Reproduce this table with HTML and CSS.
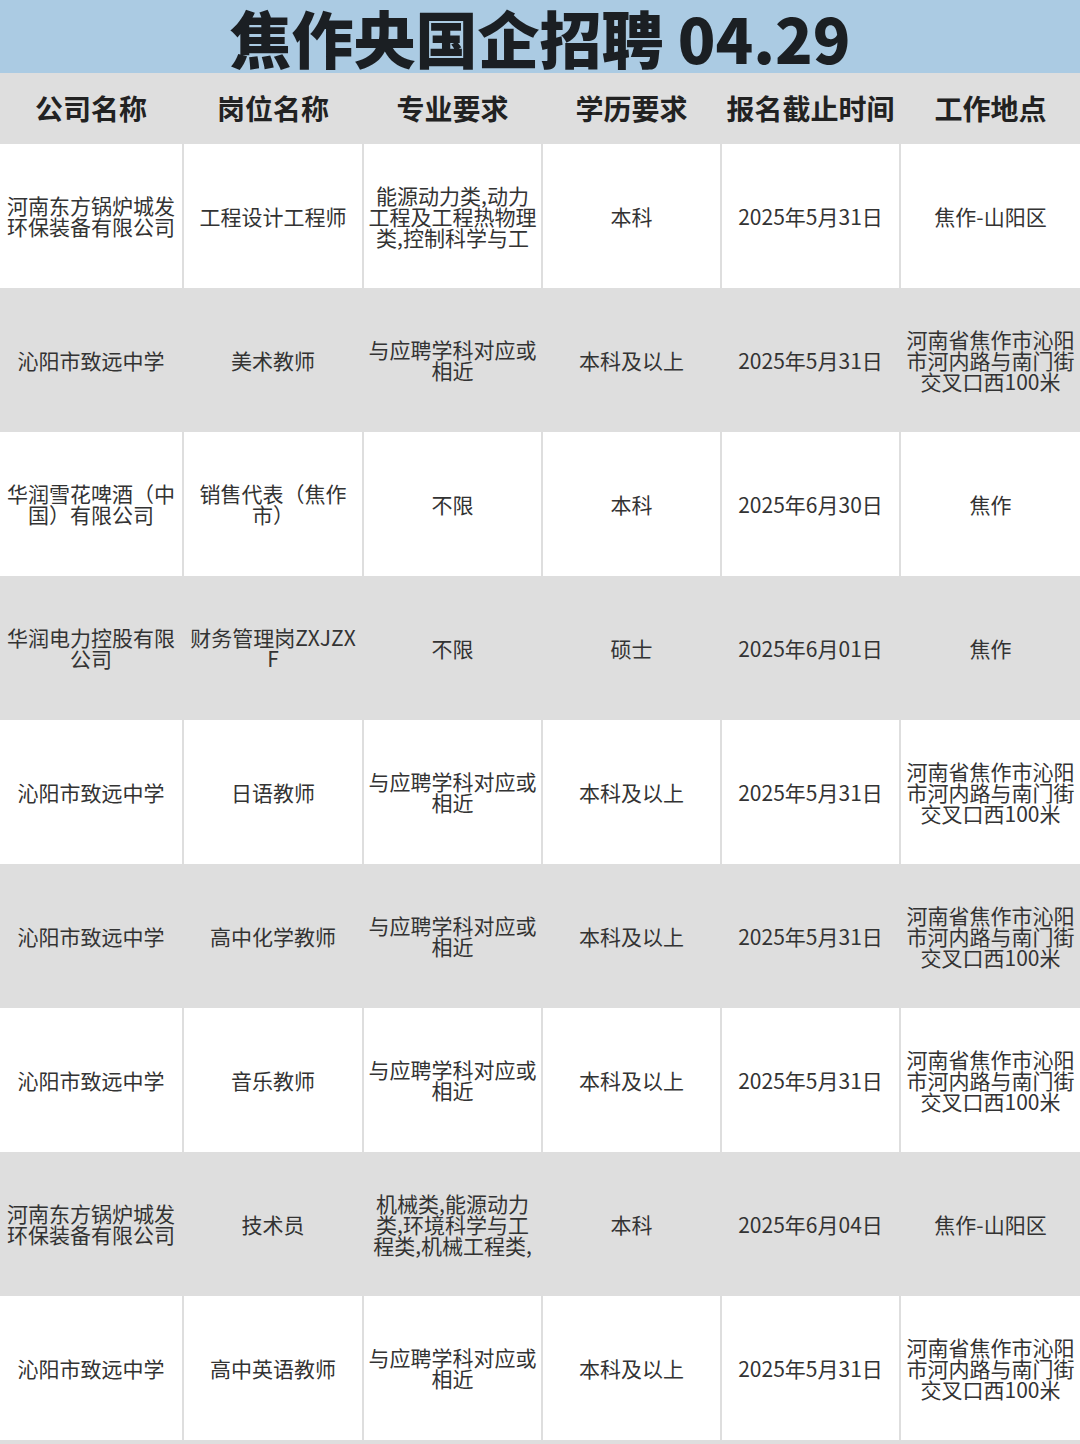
FILE: index.html
```html
<!DOCTYPE html>
<html lang="zh-CN">
<head>
<meta charset="utf-8">
<title>焦作央国企招聘 04.29</title>
<link rel="stylesheet" href="styles.css">
</head>
<body>
<div class="page">
  <h1 class="title">焦作央国企招聘 04.29</h1>
  <div class="table">
    <div class="th">公司名称</div>
    <div class="th">岗位名称</div>
    <div class="th">专业要求</div>
    <div class="th">学历要求</div>
    <div class="th">报名截止时间</div>
    <div class="th">工作地点</div>

    <div class="td">河南东方锅炉城发环保装备有限公司</div>
    <div class="td">工程设计工程师</div>
    <div class="td">能源动力类,动力工程及工程热物理类,控制科学与工</div>
    <div class="td">本科</div>
    <div class="td">2025年5月31日</div>
    <div class="td">焦作-山阳区</div>

    <div class="td alt">沁阳市致远中学</div>
    <div class="td alt">美术教师</div>
    <div class="td alt">与应聘学科对应或相近</div>
    <div class="td alt">本科及以上</div>
    <div class="td alt">2025年5月31日</div>
    <div class="td alt">河南省焦作市沁阳市河内路与南门街交叉口西100米</div>

    <div class="td">华润雪花啤酒（中国）有限公司</div>
    <div class="td">销售代表（焦作市）</div>
    <div class="td">不限</div>
    <div class="td">本科</div>
    <div class="td">2025年6月30日</div>
    <div class="td">焦作</div>

    <div class="td alt">华润电力控股有限公司</div>
    <div class="td alt">财务管理岗ZXJZXF</div>
    <div class="td alt">不限</div>
    <div class="td alt">硕士</div>
    <div class="td alt">2025年6月01日</div>
    <div class="td alt">焦作</div>

    <div class="td">沁阳市致远中学</div>
    <div class="td">日语教师</div>
    <div class="td">与应聘学科对应或相近</div>
    <div class="td">本科及以上</div>
    <div class="td">2025年5月31日</div>
    <div class="td">河南省焦作市沁阳市河内路与南门街交叉口西100米</div>

    <div class="td alt">沁阳市致远中学</div>
    <div class="td alt">高中化学教师</div>
    <div class="td alt">与应聘学科对应或相近</div>
    <div class="td alt">本科及以上</div>
    <div class="td alt">2025年5月31日</div>
    <div class="td alt">河南省焦作市沁阳市河内路与南门街交叉口西100米</div>

    <div class="td">沁阳市致远中学</div>
    <div class="td">音乐教师</div>
    <div class="td">与应聘学科对应或相近</div>
    <div class="td">本科及以上</div>
    <div class="td">2025年5月31日</div>
    <div class="td">河南省焦作市沁阳市河内路与南门街交叉口西100米</div>

    <div class="td alt">河南东方锅炉城发环保装备有限公司</div>
    <div class="td alt">技术员</div>
    <div class="td alt">机械类,能源动力类,环境科学与工程类,机械工程类,</div>
    <div class="td alt">本科</div>
    <div class="td alt">2025年6月04日</div>
    <div class="td alt">焦作-山阳区</div>

    <div class="td">沁阳市致远中学</div>
    <div class="td">高中英语教师</div>
    <div class="td">与应聘学科对应或相近</div>
    <div class="td">本科及以上</div>
    <div class="td">2025年5月31日</div>
    <div class="td">河南省焦作市沁阳市河内路与南门街交叉口西100米</div>
  </div>
</div>
</body>
</html>
```

FILE: styles.css
```css
html, body {
  margin: 0;
  padding: 0;
  background: #dedede;
}

body {
  font-family: "Noto Sans CJK SC", "Noto Sans", sans-serif;
  color: #333;
}

.page {
  width: 1080px;
  min-height: 1444px;
  background: #dedede;
}

.title {
  margin: 0;
  height: 73px;
  background: #abcbe3;
  color: #1b1f23;
  font-size: 62px;
  font-weight: 900;
  line-height: 74px;
  text-align: center;
  white-space: nowrap;
}

.table {
  display: grid;
  grid-template-columns: 182px 178px 177px 177px 177px 1fr;
  grid-template-rows: 71px repeat(9, 144px);
  column-gap: 2px;
  background: #dedede;
}

.th {
  display: flex;
  align-items: center;
  justify-content: center;
  background: #dedede;
  color: #222;
  font-size: 28px;
  font-weight: 700;
  padding-bottom: 2px;
}

.td {
  display: flex;
  align-items: center;
  justify-content: center;
  text-align: center;
  background: #fff;
  font-size: 21px;
  line-height: 21px;
  padding: 0 4px;
  word-break: break-all;
  color: #333;
}

.td.alt {
  background: #dedede;
}
```
